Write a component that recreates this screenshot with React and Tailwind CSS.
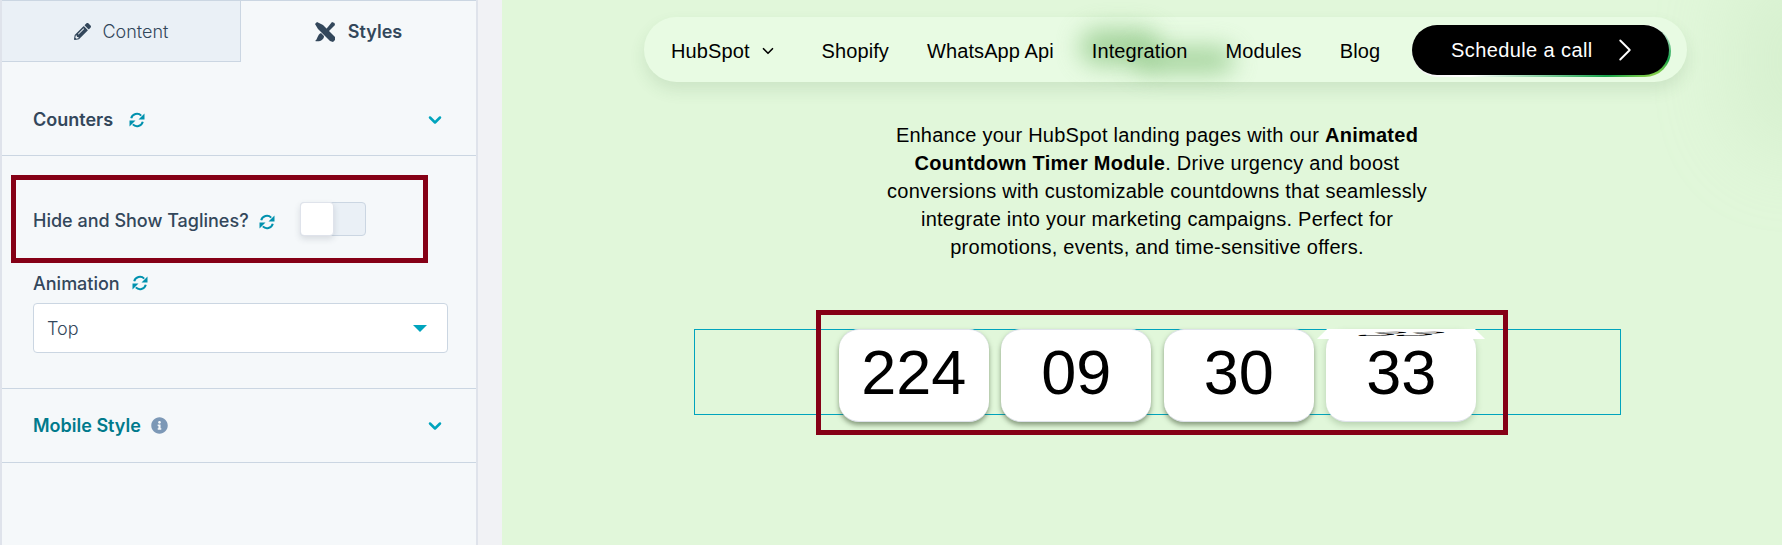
import React from 'react';
import { ChevronDown, ChevronRight } from 'lucide-react';
import { FaInfoCircle, FaPencilAlt } from 'react-icons/fa';

const Sync = () => (
    <svg width="16" height="16" viewBox="0 0 16 16" fill="none" className="text-[#0091ae] shrink-0">
        <path d="M2.2 6.2 A6 6 0 0 1 12.2 3.6" stroke="currentColor" strokeWidth="2" />
        <path d="M13.8 9.8 A6 6 0 0 1 3.8 12.4" stroke="currentColor" strokeWidth="2" />
        <path d="M15.5 1.5 V7.5 H9.5 Z" fill="currentColor" />
        <path d="M0.5 14.5 V8.5 H6.5 Z" fill="currentColor" />
    </svg>
);

const Caret = () => <ChevronDown size={20} strokeWidth={3} className="text-[#00a4bd]" />;

const StylesIcon = () => (
    <svg width="20" height="20" viewBox="0 0 20 20" className="text-[#33475b]">
        <path d="M0 2 L2 0 L8 3 L20 15 L20 18 L18 20 L15 19 L3 7 Z" fill="currentColor" />
        <path d="M17 0 L19.5 1 L20 3 L10 13 L8 11 Z" fill="currentColor" />
        <path d="M6 11 L9 14 C9 18 5 20 0 19 C3 17 2 13 6 11 Z" fill="currentColor" />
    </svg>
);

const Counter = ({ value, shadow }) => (
    <div className={`w-[150px] h-[93px] -mt-px pb-[6px] bg-white rounded-[20px] flex items-center justify-center text-[63px] leading-none text-black border-t border-b border-[#dfe3eb] ${shadow}`}>
        {value}
    </div>
);

const NavLink = ({ children }) => <span className="text-[20px] tracking-[0.1px] text-black">{children}</span>;

const App = () => (
    <div className="relative flex w-[1782px] h-[545px] overflow-hidden bg-[#e1f7da] font-['Liberation_Sans',sans-serif]">
        {/* editor sidebar */}
        <aside className="w-[478px] h-full shrink-0 bg-[#f5f8fa] border-l-2 border-r-2 border-[#dfe3eb] font-['Inter',sans-serif] text-[#33475b]">
            <div className="flex h-[62px] border-t border-[#cbd6e2]">
                <div className="w-[239px] h-[61px] flex items-center justify-center gap-[12px] bg-[#eaf0f6] border-r border-b border-[#cbd6e2] text-[18px] font-light">
                    <FaPencilAlt size={17} />
                    <span>Content</span>
                </div>
                <div className="flex-1 flex items-center justify-center gap-[13px] text-[18px] font-semibold">
                    <StylesIcon />
                    <span>Styles</span>
                </div>
            </div>

            <div className="h-[94px] px-[31px] pt-[22px] flex items-center justify-between border-b border-[#cbd6e2]">
                <div className="flex items-center gap-[16px]">
                    <span className="text-[18px] font-semibold">Counters</span>
                    <Sync />
                </div>
                <Caret />
            </div>

            <div className="h-[233px] px-[31px] border-b border-[#cbd6e2]">
                <div className="h-[114px] pt-[46px] flex items-start">
                    <span className="mt-[6px] text-[18px] font-medium leading-[26px] mr-[10px] whitespace-nowrap">Hide and Show Taglines?</span>
                    <span className="mt-[12px]"><Sync /></span>
                    <div className="relative ml-[25px] w-[66px] h-[34px] bg-[#eaf0f6] rounded-[4px] border border-[#cbd6e2]">
                        <div className="absolute -left-px -top-px w-[34px] h-[34px] bg-white rounded-[4px] border border-[#dfe3eb] shadow-[0_3px_6px_rgba(45,62,80,0.15)]" />
                    </div>
                </div>
                <div className="flex items-center gap-[12px] h-[26px]">
                    <span className="text-[18px] font-medium">Animation</span>
                    <Sync />
                </div>
                <div className="mt-[7px] w-[415px] h-[50px] pl-[13px] pr-[20px] flex items-center justify-between bg-white rounded-[4px] border border-[#cbd6e2]">
                    <span className="text-[18px] font-light">Top</span>
                    <span className="w-0 h-0 border-l-[7px] border-r-[7px] border-t-[7px] border-l-transparent border-r-transparent border-t-[#00a4bd]" />
                </div>
            </div>

            <div className="h-[74px] px-[31px] flex items-center justify-between border-b border-[#cbd6e2]">
                <div className="flex items-center gap-[10px]">
                    <span className="text-[18px] font-semibold text-[#007a8c]">Mobile Style</span>
                    <FaInfoCircle size={17} className="text-[#7c98b6]" />
                </div>
                <Caret />
            </div>
        </aside>

        {/* gutter */}
        <div className="w-[24px] h-full shrink-0 bg-[#f1f2f5]" />

        {/* page preview */}
        <main className="relative flex-1 flex flex-col items-start">
            <div className="absolute -right-[70px] -top-[40px] w-[120px] h-[200px] rounded-full bg-[#b9dcb0] opacity-25 blur-2xl" />

            <nav className="relative ml-[142px] mt-[17px] w-[1043px] h-[65px] pl-[27px] flex items-center rounded-[33px] bg-[#e8fbe3] shadow-[0_8px_16px_rgba(60,110,60,0.12)]">
                <div className="absolute left-[436px] top-[12px] w-[80px] h-[36px] bg-[#8fc786] opacity-75 blur-md rounded-full" />
                <div className="absolute left-[490px] top-[30px] w-[100px] h-[26px] bg-[#8fc786] opacity-75 blur-md rounded-full" />
                <div className="relative flex items-center gap-[9px] mr-[45px] pt-[2px]">
                    <NavLink>HubSpot</NavLink>
                    <ChevronDown size={18} strokeWidth={2.2} className="text-black" />
                </div>
                <div className="relative flex items-center gap-[38px] pt-[2px]">
                    <NavLink>Shopify</NavLink>
                    <NavLink>WhatsApp Api</NavLink>
                    <NavLink>Integration</NavLink>
                    <NavLink>Modules</NavLink>
                    <NavLink>Blog</NavLink>
                </div>
                <div className="absolute left-[768px] top-[8px] w-[259px] h-[52px] pr-[2px] pb-[2px] rounded-[26px] bg-[linear-gradient(165deg,#d4d4d4_0%,#ffffff_55%,#16a34a_85%,#c8e84a_100%)]">
                    <div className="w-full h-full flex items-center pl-[39px] rounded-[25px] bg-black text-white text-[20px] tracking-[0.4px]">
                        <span>Schedule a call</span>
                        <ChevronRight size={38} strokeWidth={1.2} className="ml-[13px]" />
                    </div>
                </div>
            </nav>

            <p className="ml-[377px] mt-[39px] w-[556px] text-center text-[20px] tracking-[0.25px] leading-[28px] text-black">
                Enhance your HubSpot landing pages with our <strong>Animated Countdown Timer Module</strong>. Drive urgency and boost conversions with customizable countdowns that seamlessly integrate into your marketing campaigns. Perfect for promotions, events, and time-sensitive offers.
            </p>

            <div className="relative ml-[192px] mt-[68px] w-[927px] h-[86px] flex justify-center gap-[12.5px] border border-[#00a4bd]">
                <Counter value="224" shadow="shadow-[0_3px_5px_rgba(60,80,50,0.55)]" />
                <Counter value="09" shadow="shadow-[0_3px_5px_rgba(60,80,50,0.55)]" />
                <Counter value="30" shadow="shadow-[0_3px_5px_rgba(60,80,50,0.55)]" />
                <Counter value="33" shadow="shadow-[0_3px_6px_rgba(60,100,50,0.25)]" />
                {/* flip frame caught mid animation on the last card */}
                <div className="absolute left-[622px] -top-px w-[168px] h-[10px] overflow-hidden bg-white [clip-path:polygon(0_100%,100%_100%,94%_0,6%_0)] flex items-center justify-center text-[62px] leading-none text-black">
                    <span className="scale-y-[0.1] scale-x-[1.1] skew-x-[-30deg]">33</span>
                </div>
            </div>
        </main>

        {/* annotation frames */}
        <div className="absolute left-[11px] top-[175px] w-[417px] h-[88px] border-[5px] border-[#850016]" />
        <div className="absolute left-[816px] top-[310px] w-[692px] h-[125px] border-[5px] border-[#850016]" />
    </div>
);

export default App;
